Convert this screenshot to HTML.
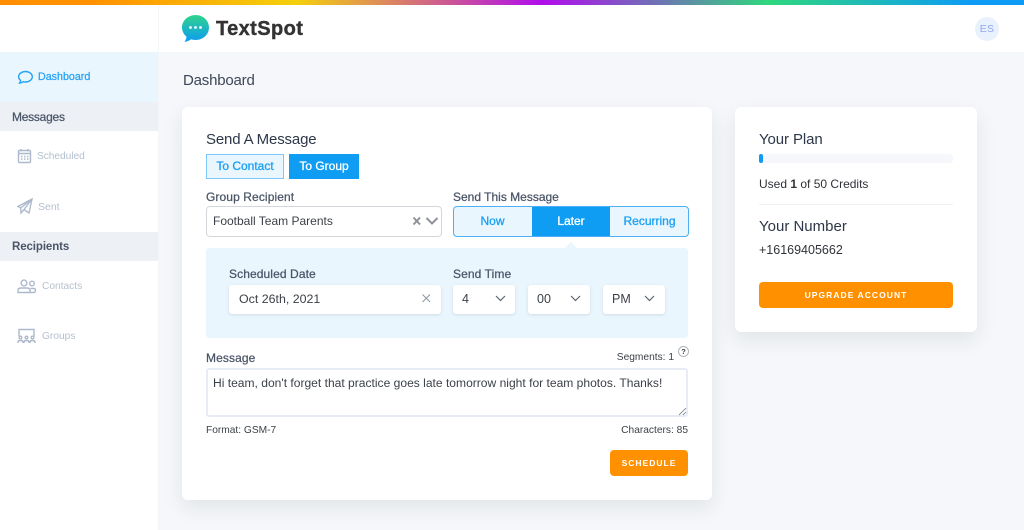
<!DOCTYPE html>
<html><head><meta charset="utf-8"><style>
html,body{margin:0;padding:0;width:1024px;height:530px;overflow:hidden;background:#f5f7fa;font-family:"Liberation Sans",sans-serif}
.a{position:absolute}
.t{position:absolute;white-space:nowrap;line-height:20px;height:20px}
.lb{color:#4a5568;font-size:12px;letter-spacing:.1px;-webkit-text-stroke:.25px #4a5568}
.h{color:#2d3748;font-size:15px}
.v{color:#3c4148;font-size:12px}
.w{position:absolute;background:#fff;border-radius:3px;box-shadow:0 1px 3px rgba(0,0,0,.1);top:285px;height:29px}
.n{color:#b6c0cf;font-size:10.200px;letter-spacing:0}
.c{text-align:center}
svg{position:absolute;overflow:visible}
</style></head><body>
<div class="a" style="left:0;top:0;width:1024px;height:5px;background:linear-gradient(90deg,#ff8f00 0%,#ff9100 9%,#f4d00c 29%,#b10cec 53%,#2fd77d 75%,#0d9bf5 95%,#0d9bf5 100%)"></div>
<div class="a" style="left:0;top:5px;width:1024px;height:47px;background:#fff"></div>
<div class="a" style="left:0;top:5px;width:158px;height:525px;background:#fff;border-right:1px solid #f4f5f8"></div>
<div class="a" style="left:0;top:52px;width:158px;height:50px;background:#e9f6fe"></div>
<div class="a" style="left:0;top:102px;width:158px;height:29px;background:#edf1f5"></div>
<div class="a" style="left:0;top:232px;width:158px;height:29px;background:#edf1f5"></div>

<svg style="left:0;top:0" width="1024" height="530" fill="none">
<defs><linearGradient id="g" x1="0" y1="0" x2="0" y2="1"><stop offset="0" stop-color="#2fd38a"/><stop offset="1" stop-color="#0d9bf5"/></linearGradient></defs>
<path d="M195.500 15c7.500 0 13.500 5.500 13.500 12.500S203 40 195.500 40c-1.500 0-3-.2-4.300-.7-2 1.500-4.500 2.400-6.700 2.700 1.200-1.700 1.800-3.500 2-5.400-2.800-2.300-4.500-5.600-4.500-9.100 0-7 6-12.500 14-12.500z" fill="url(#g)"/>
<circle cx="190.500" cy="27.500" r="1.400" fill="#fff"/><circle cx="195.500" cy="27.500" r="1.400" fill="#fff"/><circle cx="200.500" cy="27.500" r="1.400" fill="#fff"/>
<path d="M25.500 71.500c3.900 0 6.800 2.500 6.800 5.300s-2.900 5.200-6.800 5.200c-.8 0-1.500-.1-2.200-.3-1 .8-2.300 1.200-3.700 1.300.6-.8 1-1.700 1-2.600-1.200-.9-2-2.200-2-3.600 0-2.800 3-5.300 6.900-5.300z" stroke="#27a3f5" stroke-width="1.400"/>
<g stroke="#aeb9cb" stroke-width="1.400"><rect x="18.500" y="150.500" width="12" height="12" rx="1"/><path d="M18.500 153.500h12M21 149v2.500M28 149v2.500M21 156.500h1.500M24 156.500h1.500M27 156.500h1.500M21 159h1.500M24 159h1.500M27 159h1.500"/>
<path d="M32 199l-3 14-5-3.500-3 3.500-.3-5-2.700-1.500zM32 199l-11.300 9M24 209.500l8-10.500"/>
<circle cx="24" cy="283" r="2.900"/><circle cx="32" cy="283.500" r="2.300"/><path d="M18 292.500v-2c0-1.700 1.200-2.500 3-2.500h6c1.800 0 3 .8 3 2.500v2zM30.500 288.500h3c1.500 0 2 .8 2 2s-.5 2-2 2h-3"/>
<path d="M19 336.500v-7h15v7M18 343v-1c0-1 1-1.500 2.500-1.500s2.500.5 2.500 1.500v1M24 343v-1c0-1 1-1.500 2.500-1.500s2.500.5 2.500 1.500v1M30 343v-1c0-1 1-1.500 2.500-1.500s2.500.5 2.500 1.500v1"/><circle cx="20.500" cy="337.500" r="1.300"/><circle cx="26.500" cy="337.500" r="1.300"/><circle cx="32.500" cy="337.500" r="1.300"/></g>
</svg>

<div class="t" style="left:216px;top:19px;font-size:20px;font-weight:bold;color:#333;letter-spacing:.4px;line-height:20px;-webkit-text-stroke:.4px #333">TextSpot</div>
<div class="a c" style="left:975px;top:17px;width:24px;height:24px;border-radius:50%;background:#e9f1fd;color:#8fa8f0;font-size:10.500px;line-height:25px;letter-spacing:.3px">ES</div>

<div class="t" style="left:38px;top:67px;font-size:10.700px;color:#27a3f5;-webkit-text-stroke:.25px #27a3f5">Dashboard</div>
<div class="t lb" style="left:12px;top:107px;letter-spacing:-.25px">Messages</div>
<div class="t n" style="left:37px;top:147px;letter-spacing:-.05px">Scheduled</div>
<div class="t n" style="left:38px;top:197px;font-size:10.500px">Sent</div>
<div class="t lb" style="left:12px;top:237px;font-weight:bold;-webkit-text-stroke:0;letter-spacing:-.1px;font-size:11.500px">Recipients</div>
<div class="t n" style="left:42px;top:277px">Contacts</div>
<div class="t n" style="left:42px;top:327px">Groups</div>

<div class="t h" style="left:183px;top:71px;letter-spacing:-.2px;color:#3d4757">Dashboard</div>

<div class="a" style="left:182px;top:107px;width:530px;height:393px;background:#fff;border-radius:6px;box-shadow:0 8px 20px rgba(30,40,60,.09)"></div>
<div class="a" style="left:735px;top:107px;width:242px;height:225px;background:#fff;border-radius:6px;box-shadow:0 8px 20px rgba(30,40,60,.09)"></div>

<div class="t h" style="left:206px;top:130px;letter-spacing:-.15px">Send A Message</div>
<div class="a c" style="left:206px;top:154px;width:76px;height:23px;border:1px solid #7cc8f8;background:#e9f6fe;color:#1ba0f3;font-size:12px;line-height:23px;-webkit-text-stroke:.3px #1ba0f3">To Contact</div>
<div class="a c" style="left:289px;top:154px;width:70px;height:25px;background:#0f9cf3;color:#fff;font-size:12px;line-height:25px;-webkit-text-stroke:.3px #fff">To Group</div>

<div class="t lb" style="left:206px;top:187px">Group Recipient</div>
<div class="a" style="left:206px;top:206px;width:234px;height:29px;background:#fff;border:1px solid #d3d7dc;border-radius:4px"></div>
<div class="t v" style="left:213px;top:211px">Football Team Parents</div>

<div class="t lb" style="left:453px;top:187px;letter-spacing:0">Send This Message</div>
<div class="a" style="left:453px;top:206px;width:234px;height:29px;border:1px solid #4db0f5;border-radius:4px;background:#e9f6fe;overflow:hidden">
<div class="a" style="left:78px;top:0;width:78px;height:29px;background:#0f9cf3"></div></div>
<div class="t c" style="left:453px;top:211px;width:79px;font-size:12px;color:#1ba0f3;-webkit-text-stroke:.3px #1ba0f3">Now</div>
<div class="t c" style="left:532px;top:211px;width:78px;font-size:12px;color:#fff;-webkit-text-stroke:.3px #fff">Later</div>
<div class="t c" style="left:610px;top:211px;width:79px;font-size:12px;color:#1ba0f3;-webkit-text-stroke:.3px #1ba0f3">Recurring</div>

<div class="a" style="left:206px;top:248px;width:482px;height:90px;background:#e9f6fe;border-radius:3px"></div>
<div class="a" style="left:565px;top:242px;width:0;height:0;border-left:6px solid transparent;border-right:6px solid transparent;border-bottom:6px solid #e9f6fe"></div>
<div class="t lb" style="left:229px;top:264px">Scheduled Date</div>
<div class="t lb" style="left:453px;top:264px">Send Time</div>
<div class="w" style="left:229px;width:212px"></div>
<div class="w" style="left:453px;width:62px"></div>
<div class="w" style="left:528px;width:62px"></div>
<div class="w" style="left:603px;width:62px"></div>
<div class="t v" style="left:239px;top:289px;font-size:12.400px">Oct 26th, 2021</div>
<div class="t v" style="left:462px;top:289px;font-size:12.500px">4</div>
<div class="t v" style="left:537px;top:289px;font-size:12.500px">00</div>
<div class="t v" style="left:612px;top:289px;font-size:12.500px">PM</div>

<div class="t lb" style="left:206px;top:348px">Message</div>
<div class="t" style="right:350px;top:348px;font-size:10.200px;color:#3c4148">Segments: 1</div>
<div class="a c" style="left:678px;top:346px;width:9px;height:9px;border:1px solid #aeb4bb;border-radius:50%;font-size:7.500px;line-height:9px;font-weight:bold;color:#444">?</div>
<div class="a" style="left:206px;top:368px;width:478px;height:45px;border:2px solid #e6ebf5;border-radius:3px;background:#fff"></div>
<div class="t v" style="left:213px;top:373px;font-size:12.070px">Hi team, don't forget that practice goes late tomorrow night for team photos. Thanks!</div>
<div class="t" style="left:206px;top:421px;font-size:10.200px;color:#3c4148">Format: GSM-7</div>
<div class="t" style="right:336px;top:421px;font-size:10.200px;color:#3c4148">Characters: 85</div>
<div class="a c" style="left:610px;top:450px;width:78px;height:26px;background:#ff9100;border-radius:4px;color:#fff;font-size:8.500px;line-height:26px;letter-spacing:1px;font-weight:bold">SCHEDULE</div>

<div class="t h" style="left:759px;top:130px;letter-spacing:-.1px">Your Plan</div>
<div class="a" style="left:759px;top:154px;width:194px;height:9px;background:#f5f7fa;border-radius:3px"></div>
<div class="a" style="left:759px;top:154px;width:4px;height:9px;background:#0d9bf5;border-radius:2px"></div>
<div class="t" style="left:759px;top:174px;font-size:12px;color:#2f3338">Used <b>1</b> of 50 Credits</div>
<div class="a" style="left:759px;top:204px;width:194px;height:1px;background:#f0f2f5"></div>
<div class="t h" style="left:759px;top:217px">Your Number</div>
<div class="t" style="left:759px;top:240px;font-size:12.500px;color:#2f3338">+16169405662</div>
<div class="a c" style="left:759px;top:282px;width:194px;height:26px;background:#ff9100;border-radius:4px;color:#fff;font-size:8.500px;line-height:26px;letter-spacing:1.050px;font-weight:bold">UPGRADE ACCOUNT</div>

<svg style="left:0;top:0" width="1024" height="530" fill="none">
<path d="M413.500 217.500l6.500 7M420 217.500l-6.500 7" stroke="#8e9298" stroke-width="2"/>
<path d="M426.500 218l5.500 5.500 5.500-5.500" stroke="#8e9298" stroke-width="2"/>
<path d="M422.500 294.500l7.500 7.500M430 294.500l-7.500 7.500" stroke="#8d97a5" stroke-width="1"/>
<g stroke="#5d6670" stroke-width="1.200"><path d="M496 296l4.500 4.500 4.500-4.500M571 296l4.500 4.500 4.500-4.500M645 296l4.500 4.500 4.500-4.500"/></g>
<path d="M679 415l7-7M683 415l3-3" stroke="#777" stroke-width=".8"/>
</svg>
</body></html>
